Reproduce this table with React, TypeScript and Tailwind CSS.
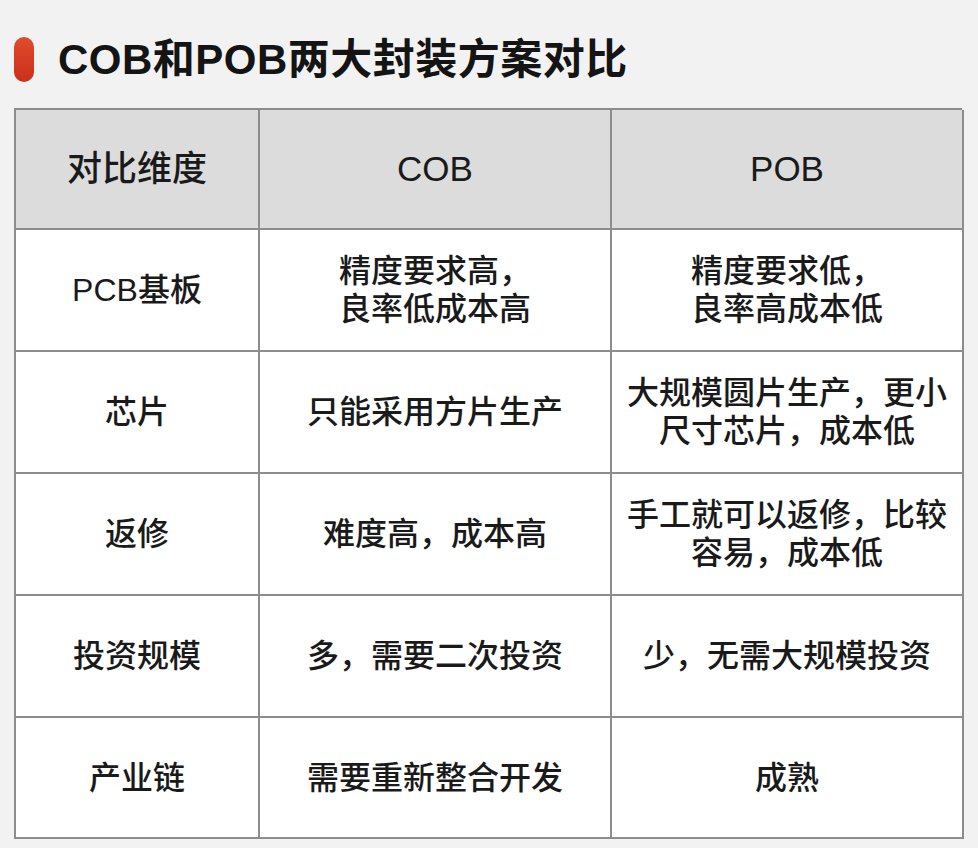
const rows: [string, string[], string[]][] = [
  ["PCB基板", ["精度要求高，", "良率低成本高"], ["精度要求低，", "良率高成本低"]],
  ["芯片", ["只能采用方片生产"], ["大规模圆片生产，更小", "尺寸芯片，成本低"]],
  ["返修", ["难度高，成本高"], ["手工就可以返修，比较", "容易，成本低"]],
  ["投资规模", ["多，需要二次投资"], ["少，无需大规模投资"]],
  ["产业链", ["需要重新整合开发"], ["成熟"]],
];

function Cell({ lines, className = "" }: { lines: string[]; className?: string }) {
  return (
    <div
      className={`flex flex-col items-center justify-center border-r-2 border-b-2 border-[#8c8c8c] text-center font-medium leading-[38px] text-[#1a1a1a] ${className}`}
    >
      {lines.map((l, i) => (
        <span key={i}>{l}</span>
      ))}
    </div>
  );
}

export default function App() {
  return (
    <div
      className="h-[848px] w-[978px] bg-[#f2f2f2] pt-[37px] pl-[14px]"
      style={{ fontFamily: '"Liberation Sans", "Noto Sans CJK SC", sans-serif' }}
    >
      {/* title */}
      <div className="flex h-[45px] items-center gap-[24px]">
        <div className="h-[45px] w-[20px] rounded-full bg-gradient-to-b from-[#e24a2c] to-[#c9301b]" />
        <h1 className="text-[42px] font-bold leading-none tracking-[0.5px] text-[#141414]">
          COB和POB两大封装方案对比
        </h1>
      </div>

      {/* table */}
      <div className="mt-[26px] grid w-[948px] grid-cols-[244px_352px_352px] grid-rows-[120px_122px_122px_122px_122px_121px] border-t-2 border-l-2 border-[#8c8c8c]">
        <Cell lines={["对比维度"]} className="bg-[#dcdcdc] text-[35px]" />
        <Cell lines={["COB"]} className="bg-[#dcdcdc] text-[35px]" />
        <Cell lines={["POB"]} className="bg-[#dcdcdc] text-[35px]" />
        {rows.map(([name, cob, pob]) => (
          <>
            <Cell key={name + "a"} lines={[name]} className="bg-white text-[32px]" />
            <Cell key={name + "b"} lines={cob} className="bg-white text-[32px]" />
            <Cell key={name + "c"} lines={pob} className="bg-white text-[32px]" />
          </>
        ))}
      </div>
    </div>
  );
}
